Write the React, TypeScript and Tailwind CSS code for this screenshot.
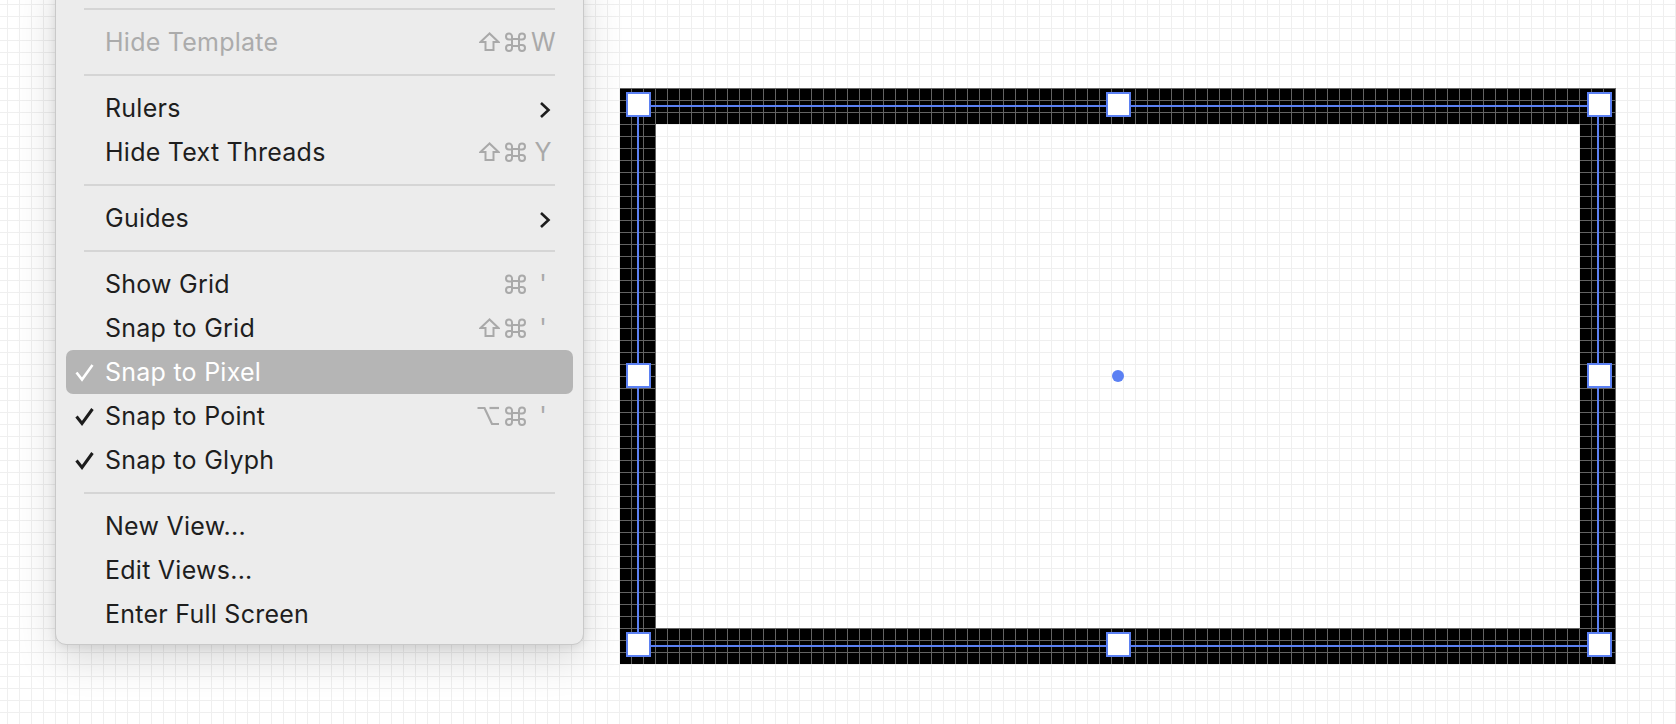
import React from "react";

type Mod = "shift" | "cmd" | "opt";

type Item =
  | { type: "sep" }
  | {
      type: "row";
      label: string;
      mods?: Mod[];
      keyChar?: string;
      submenu?: boolean;
      checked?: boolean;
      disabled?: boolean;
      active?: boolean;
    };

const items: Item[] = [
  { type: "sep" },
  { type: "row", label: "Hide Template", mods: ["shift", "cmd"], keyChar: "W", disabled: true },
  { type: "sep" },
  { type: "row", label: "Rulers", submenu: true },
  { type: "row", label: "Hide Text Threads", mods: ["shift", "cmd"], keyChar: "Y" },
  { type: "sep" },
  { type: "row", label: "Guides", submenu: true },
  { type: "sep" },
  { type: "row", label: "Show Grid", mods: ["cmd"], keyChar: "'" },
  { type: "row", label: "Snap to Grid", mods: ["shift", "cmd"], keyChar: "'" },
  { type: "row", label: "Snap to Pixel", checked: true, active: true },
  { type: "row", label: "Snap to Point", mods: ["opt", "cmd"], keyChar: "'", checked: true },
  { type: "row", label: "Snap to Glyph", checked: true },
  { type: "sep" },
  { type: "row", label: "New View..." },
  { type: "row", label: "Edit Views..." },
  { type: "row", label: "Enter Full Screen" },
];

function Check({ white }: { white?: boolean }) {
  return (
    <svg width="19" height="19" viewBox="0 0 19 19" fill="none">
      <path
        d="M1.5 9.5 L7 16.5 L17.5 2"
        stroke={white ? "#ffffff" : "#1c1c1c"}
        strokeWidth={white ? 2.6 : 3}
        strokeLinecap="butt"
        strokeLinejoin="miter"
      />
    </svg>
  );
}

function Chevron() {
  return (
    <svg width="12" height="18" viewBox="0 0 12 18" fill="none" className="mr-[4px] mt-[3px]">
      <path d="M2 2 L9.5 9 L2 16" stroke="#1c1c1c" strokeWidth="2.6" />
    </svg>
  );
}

function ModIcon({ m }: { m: Mod }) {
  if (m === "shift") {
    return (
      <svg width="21" height="20" viewBox="0 0 21 20" fill="none">
        <path
          d="M10.5 1.5 L1.5 10 H6.5 V18 H14.5 V10 H19.5 Z"
          stroke="#a9a9a9"
          strokeWidth="2"
          strokeLinejoin="miter"
        />
      </svg>
    );
  }
  if (m === "opt") {
    return (
      <svg width="23" height="20" viewBox="0 0 23 20" fill="none">
        <path d="M0.5 2 H7.5 L15 18 H22" stroke="#a9a9a9" strokeWidth="2.2" />
        <path d="M12.5 2 H22" stroke="#a9a9a9" strokeWidth="2.2" />
      </svg>
    );
  }
  return (
    <svg width="21" height="20" viewBox="0 0 21 20" fill="none">
      <path
        d="M7 7 H14 V14 H7 Z M7 7 V4.5 A3 3 0 1 0 4 7.5 H7 M14 7 V4.5 A3 3 0 1 1 17 7.5 H14 M7 14 V16 A3 3 0 1 1 4 13 H7 M14 14 V16 A3 3 0 1 0 17 13 H14"
        stroke="#a9a9a9"
        strokeWidth="2"
      />
    </svg>
  );
}

function Row({ item }: { item: Extract<Item, { type: "row" }> }) {
  const labelColor = item.active
    ? "text-white"
    : item.disabled
    ? "text-[#ababab]"
    : "text-[#1e1e1e]";
  return (
    <div
      className={
        item.active
          ? "flex h-[44px] items-center rounded-[7px] bg-[#b5b5b5] pl-[9px] pr-[18px]"
          : "flex h-[44px] items-center rounded-[7px] pl-[9px] pr-[18px]"
      }
    >
      <div className="flex w-[30px] items-center">{item.checked && <Check white={item.active} />}</div>
      <span
        className={`flex-1 whitespace-nowrap font-['Inter',sans-serif] text-[25px] leading-none tracking-[0.25px] ${labelColor}`}
      >
        {item.label}
      </span>
      {item.submenu && <Chevron />}
      {item.keyChar && (
        <div className="flex items-center gap-[5px] text-[#a9a9a9]">
          {item.mods?.map((m, i) => (
            <ModIcon key={i} m={m} />
          ))}
          <span className="w-[24px] text-center font-['Inter',sans-serif] text-[25px] leading-none">
            {item.keyChar}
          </span>
        </div>
      )}
    </div>
  );
}

function Handle({ left, top }: { left: string; top: string }) {
  return <div className={`absolute ${left} ${top} h-[25px] w-[25px] border-2 border-[#5b80f3] bg-white`} />;
}

export default function App() {
  return (
    <div className="relative h-[724px] w-full overflow-hidden bg-white bg-[image:linear-gradient(to_right,#efefef_1px,transparent_1px),linear-gradient(to_bottom,#efefef_1px,transparent_1px)] bg-[size:12px_12px] bg-[position:7px_4px] bg-fixed">
      {/* Canvas shape */}
      <div className="absolute left-[620px] top-[88px] h-[576px] w-[996px] bg-black bg-[image:linear-gradient(to_right,#636363_1px,transparent_1px),linear-gradient(to_bottom,#636363_1px,transparent_1px)] bg-[size:12px_12px] bg-[position:7px_4px] bg-fixed">
        <div className="absolute inset-[36px] bg-white bg-[image:linear-gradient(to_right,#efefef_1px,transparent_1px),linear-gradient(to_bottom,#efefef_1px,transparent_1px)] bg-[size:12px_12px] bg-[position:7px_4px] bg-fixed" />
        <div className="absolute inset-[17px] border-2 border-[#5b80f3]" />
        <Handle left="left-[6px]" top="top-[4px]" />
        <Handle left="left-[486px]" top="top-[4px]" />
        <Handle left="left-[967px]" top="top-[4px]" />
        <Handle left="left-[6px]" top="top-[275px]" />
        <Handle left="left-[967px]" top="top-[275px]" />
        <Handle left="left-[6px]" top="top-[544px]" />
        <Handle left="left-[486px]" top="top-[544px]" />
        <Handle left="left-[967px]" top="top-[544px]" />
        <div className="absolute left-[492px] top-[282px] h-[12px] w-[12px] rounded-full bg-[#5b80f3]" />
      </div>

      {/* Menu */}
      <div className="absolute left-[55px] top-[-24px] w-[529px] rounded-b-[11px] border border-[#c9c9c9] bg-[#ececec] px-[10px] pb-[8px] pt-[21px] shadow-[0_14px_40px_rgba(0,0,0,0.16),0_2px_8px_rgba(0,0,0,0.08)]">
        {items.map((it, i) =>
          it.type === "sep" ? (
            <div key={i} className="flex h-[22px] items-center px-[18px]">
              <div className="h-[2px] w-full bg-[#d5d5d5]" />
            </div>
          ) : (
            <Row key={i} item={it} />
          )
        )}
      </div>
    </div>
  );
}
